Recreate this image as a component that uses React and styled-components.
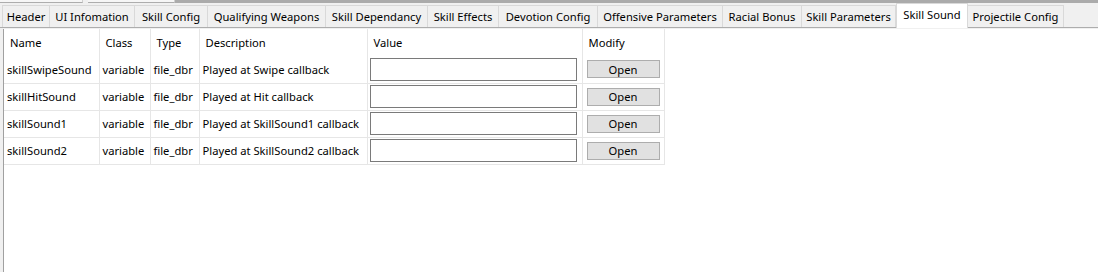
import React from "react";
import styled, { createGlobalStyle } from "styled-components";

const GlobalStyle = createGlobalStyle`
  html, body {
    margin: 0;
    padding: 0;
    background: #ffffff;
  }
  body {
    font-family: "Noto Sans", "Open Sans", sans-serif;
    font-size: 11.2px;
    color: #000;
  }
`;

const tabs = [
  { label: "Header", w: 48 },
  { label: "UI Infomation", w: 85 },
  { label: "Skill Config", w: 73 },
  { label: "Qualifying Weapons", w: 118 },
  { label: "Skill Dependancy", w: 102 },
  { label: "Skill Effects", w: 71 },
  { label: "Devotion Config", w: 99 },
  { label: "Offensive Parameters", w: 125 },
  { label: "Racial Bonus", w: 79 },
  { label: "Skill Parameters", w: 94 },
  { label: "Skill Sound", w: 72, active: true },
  { label: "Projectile Config", w: 96 },
];

const rows = [
  { name: "skillSwipeSound", desc: "Played at Swipe callback" },
  { name: "skillHitSound", desc: "Played at Hit callback" },
  { name: "skillSound1", desc: "Played at SkillSound1 callback" },
  { name: "skillSound2", desc: "Played at SkillSound2 callback" },
];

const Window = styled.div`
  width: 1098px;
  height: 272px;
  background: #f0f0f0;
  display: flex;
  flex-direction: column;
  overflow: hidden;
`;

const TopStrip = styled.div`
  height: 3px;
  display: flex;
  flex-shrink: 0;
`;

const StubTab = styled.div`
  width: ${(p) => p.$w}px;
  margin-right: ${(p) => p.$gap || 0}px;
  border-bottom: 1px solid #adadad;
  border-right: 1px solid #cfcfcf;
  box-sizing: border-box;
  background: #f6f6f6;
`;

const StubBar = styled.div`
  flex: 1;
  background: #ababab;
`;

const TabBar = styled.div`
  height: 25px;
  display: flex;
  align-items: flex-end;
  padding-left: 2px;
  border-bottom: 1px solid #adadad;
  box-sizing: border-box;
  flex-shrink: 0;
`;

const Tab = styled.div`
  width: ${(p) => p.$w}px;
  height: ${(p) => (p.$active ? 25 : 22)}px;
  box-sizing: border-box;
  border: 1px solid #d9d9d9;
  border-left: ${(p) => (p.$first || p.$active ? "1px solid #d9d9d9" : "none")};
  border-bottom: none;
  background: ${(p) => (p.$active ? "#ffffff" : "#f0f0f0")};
  margin-bottom: ${(p) => (p.$active ? -1 : 0)}px;
  display: flex;
  align-items: center;
  justify-content: center;
  padding-bottom: ${(p) => (p.$active ? 4 : 1)}px;
  white-space: nowrap;
`;

const Content = styled.div`
  flex: 1;
  background: #ffffff;
  margin-left: 3px;
  border-left: 1px solid #a0a0a0;
  margin-top: 1px;
`;

const Table = styled.table`
  border-collapse: collapse;
  table-layout: fixed;
`;

const Th = styled.th`
  width: ${(p) => p.$w}px;
  height: 27px;
  padding: 0 0 1px 6px;
  text-align: left;
  font-weight: normal;
  border-right: 1px solid #e6e6e6;
  box-sizing: border-box;
  white-space: nowrap;
`;

const Td = styled.td`
  height: 27px;
  padding: 0 0 0 ${(p) => p.$pad ?? 3}px;
  border-right: 1px solid #e6e6e6;
  border-bottom: 1px solid #e6e6e6;
  white-space: nowrap;
  box-sizing: border-box;
`;

const ValueInput = styled.input`
  width: 207px;
  height: 23px;
  box-sizing: border-box;
  border: 1px solid #7a7a7a;
  margin: 0;
  padding: 0 3px;
  display: block;
  font: inherit;
`;

const OpenButton = styled.button`
  width: 73px;
  height: 18px;
  margin: 0 0 0 4px;
  padding: 0;
  box-sizing: border-box;
  border: 1px solid #adadad;
  background: #e1e1e1;
  font: inherit;
  color: #000;
  display: block;
`;

export default function App() {
  return (
    <>
      <GlobalStyle />
      <Window>
        <TopStrip>
          <StubTab $w={83} $gap={5} />
          <StubTab $w={87} $gap={0} />
          <StubBar />
        </TopStrip>
        <TabBar>
          {tabs.map((t, i) => (
            <Tab key={t.label} $w={t.w} $active={t.active} $first={i === 0}>
              {t.label}
            </Tab>
          ))}
        </TabBar>
        <Content>
          <Table>
            <thead>
              <tr>
                <Th $w={95}>Name</Th>
                <Th $w={51}>Class</Th>
                <Th $w={49}>Type</Th>
                <Th $w={168}>Description</Th>
                <Th $w={215}>Value</Th>
                <Th $w={82}>Modify</Th>
              </tr>
            </thead>
            <tbody>
              {rows.map((r) => (
                <tr key={r.name}>
                  <Td>{r.name}</Td>
                  <Td>variable</Td>
                  <Td>file_dbr</Td>
                  <Td>{r.desc}</Td>
                  <Td $pad={2}>
                    <ValueInput type="text" />
                  </Td>
                  <Td $pad={0}>
                    <OpenButton>Open</OpenButton>
                  </Td>
                </tr>
              ))}
            </tbody>
          </Table>
        </Content>
      </Window>
    </>
  );
}
